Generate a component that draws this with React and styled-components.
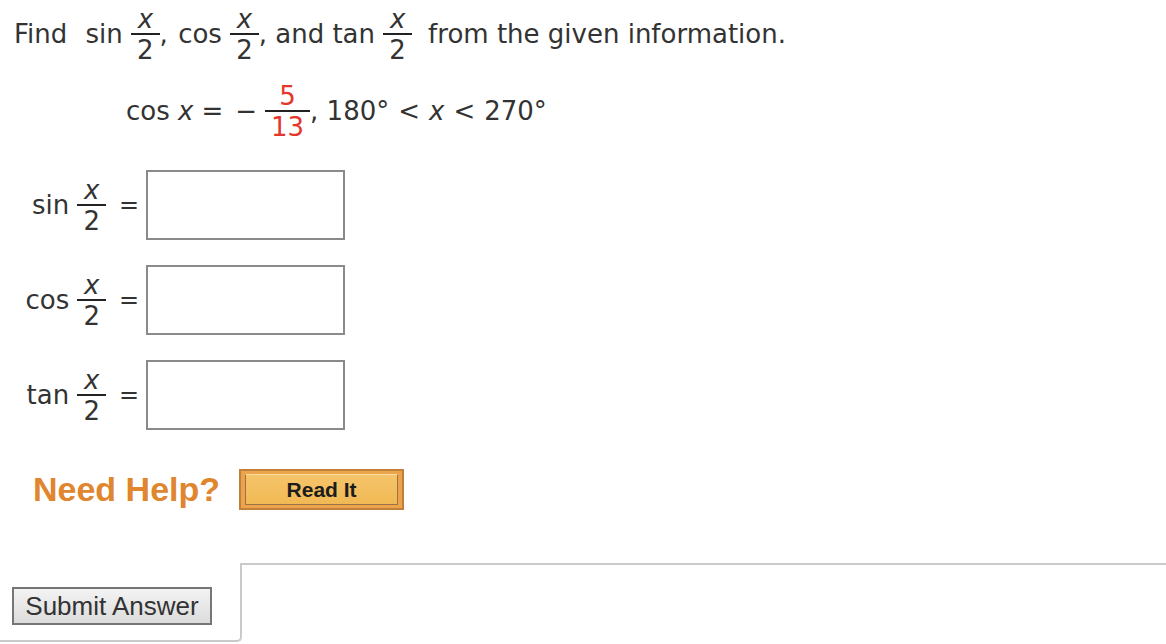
import React from "react";
import styled, { createGlobalStyle } from "styled-components";

const GlobalStyle = createGlobalStyle`
  html, body {
    margin: 0;
    padding: 0;
    background: #fff;
  }
  body {
    font-family: "DejaVu Sans", Verdana, sans-serif;
    color: #333;
  }
`;

const Page = styled.div`
  width: 1166px;
  height: 644px;
  overflow: hidden;
  padding-top: 7px;
  box-sizing: border-box;
`;

const Line = styled.p`
  margin: ${(p) => p.$top || 0}px 0 0 ${(p) => p.$indent || 14}px;
  font-size: 26px;
  line-height: 24px;
  white-space: nowrap;
`;

const FracBox = styled.span`
  display: inline-flex;
  flex-direction: column;
  align-items: stretch;
  vertical-align: 15px;
  margin: 0 ${(p) => p.$right ?? p.$gap ?? 0}px 0 ${(p) => p.$gap ?? 0}px;
  color: ${(p) => (p.$red ? "#e4362b" : "inherit")};
  text-align: center;
`;

const Num = styled.span`
  line-height: 24px;
  padding: 0 6px 2px;
  border-bottom: 2px solid #222;
`;

const Den = styled.span`
  line-height: 24px;
  padding: 3px 6px 0;
`;

const Var = styled.i`
  font-style: italic;
`;

const Rel = styled.span`
  margin: 0 ${(p) => p.$after ?? p.$space ?? 6}px 0 ${(p) => p.$space ?? 6}px;
`;

const Gap = styled.span`
  display: inline-block;
  width: ${(p) => p.$w}px;
`;

const Frac = ({ top, bottom, red, gap, right }) => (
  <FracBox $red={red} $gap={gap} $right={right}>
    <Num>{top}</Num>
    <Den>{bottom}</Den>
  </FracBox>
);

const Answers = styled.div`
  margin-top: 31px;
  display: flex;
  flex-direction: column;
  gap: 25px;
`;

const AnswerRow = styled.div`
  display: flex;
  align-items: center;
  height: 70px;
`;

const Label = styled.div`
  width: 106px;
  text-align: right;
  font-size: 26px;
  line-height: 24px;
  white-space: nowrap;
`;

const Equals = styled.span`
  font-size: 24px;
  margin: 0 7px 0 13px;
`;

const AnswerBox = styled.input`
  box-sizing: border-box;
  width: 199px;
  height: 70px;
  border: 2px solid #8a8a8a;
  background: #fff;
  outline: none;
  font-size: 22px;
`;

const HelpRow = styled.div`
  margin: 39px 0 0 33px;
  height: 41px;
  display: flex;
  align-items: center;
  gap: 19px;
`;

const HelpText = styled.span`
  font-family: "Liberation Sans", Arial, sans-serif;
  font-weight: bold;
  font-size: 34px;
  color: #e0862e;
`;

const ReadIt = styled.button`
  box-sizing: border-box;
  width: 165px;
  height: 41px;
  padding: 3px 4px;
  border: 2px solid #c0803a;
  background: #eda34c;
  cursor: pointer;
  display: flex;
`;

const ReadItFace = styled.span`
  flex: 1;
  display: flex;
  align-items: center;
  justify-content: center;
  border: 1px solid #9c7346;
  border-top-color: #f7dca4;
  background: linear-gradient(#f5c46a, #f1b954);
  font-family: "Liberation Sans", Arial, sans-serif;
  font-weight: bold;
  font-size: 21px;
  color: #1c1c1c;
`;

const Footer = styled.div`
  margin-top: 53px;
  display: flex;
  height: 79px;
`;

const SubmitCell = styled.div`
  box-sizing: border-box;
  width: 242px;
  padding: 24px 0 0 12px;
  border-right: 2px solid #cacaca;
  border-bottom: 2px solid #cacaca;
  border-bottom-right-radius: 5px;
`;

const SubmitButton = styled.button`
  box-sizing: border-box;
  width: 200px;
  height: 38px;
  padding: 0;
  border: 2px solid #767676;
  background: linear-gradient(#f3f3f3, #dcdcdc);
  font-family: "Liberation Sans", Arial, sans-serif;
  font-size: 26px;
  color: #333;
  cursor: pointer;
`;

const Aside = styled.div`
  flex: 1;
  border-top: 2px solid #cacaca;
`;

const x = <Var>x</Var>;

export default function App() {
  const rows = ["sin", "cos", "tan"];
  return (
    <Page>
      <GlobalStyle />
      <Line>
        Find&nbsp;<Gap $w={10} />sin <Frac top={x} bottom="2" />,
        <Gap $w={2} /> cos <Frac top={x} bottom="2" />, and tan{" "}
        <Frac top={x} bottom="2" right={8} /> from the given information.
      </Line>
      <Line $top={22} $indent={126}>
        cos{" "}{x}
        <Rel $space={8}>=</Rel>
        <Rel $space={4} $after={2}>−</Rel>
        <Frac top="5" bottom="13" red gap={6} />
        <span style={{ marginLeft: -6 }}>, 180°</span>
        <Rel $space={9}>&lt;</Rel>
        {x}
        <Rel $space={9}>&lt;</Rel>
        270°
      </Line>
      <Answers>
        {rows.map((fn) => (
          <AnswerRow key={fn}>
            <Label>
              {fn} <Frac top={x} bottom="2" />
            </Label>
            <Equals>=</Equals>
            <AnswerBox type="text" aria-label={`${fn} x/2`} />
          </AnswerRow>
        ))}
      </Answers>
      <HelpRow>
        <HelpText>Need Help?</HelpText>
        <ReadIt>
          <ReadItFace>Read It</ReadItFace>
        </ReadIt>
      </HelpRow>
      <Footer>
        <SubmitCell>
          <SubmitButton>Submit Answer</SubmitButton>
        </SubmitCell>
        <Aside />
      </Footer>
    </Page>
  );
}
